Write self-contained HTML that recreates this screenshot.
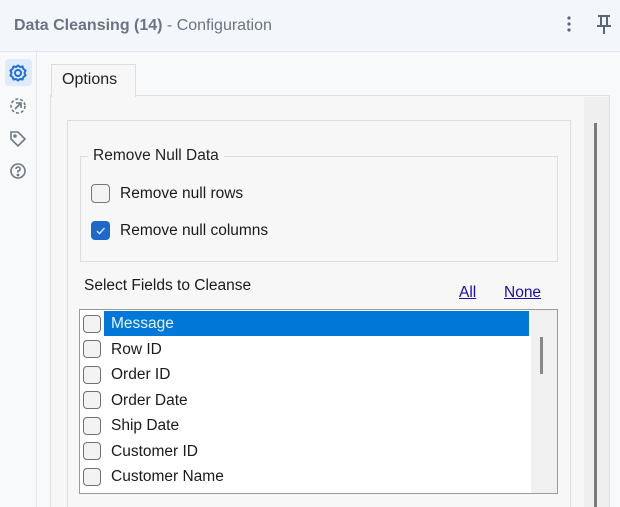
<!DOCTYPE html>
<html><head><meta charset="utf-8"><style>
*{box-sizing:border-box;margin:0;padding:0}
html,body{width:620px;height:507px;overflow:hidden}
body{background:#f8f9fb;font-family:"Liberation Sans",sans-serif;color:#222;position:relative}
.abs{position:absolute}
.hdr{left:0;top:0;width:620px;height:52px;background:#f3f6fb;border-bottom:1px solid #dde2ec}
.title{left:14px;top:17px;font-size:16px;color:#6b7385}
.side{left:0;top:52px;width:37px;height:455px;border-right:1px solid #e2e5ea;background:#f8f9fb}
.cb{position:absolute;width:18px;height:18px;border:1.5px solid #707070;border-radius:4px;background:#f3f3f3}
.t{position:absolute;font-size:15.5px;color:#1a1a1a;white-space:nowrap}
.row{position:absolute;left:0;width:470px;height:25px}
</style></head><body>
<div class="abs hdr"></div>
<div class="abs title"><b>Data Cleansing (14)</b> - Configuration</div>
<svg class="abs" style="left:562px;top:15px" width="14" height="18"><circle cx="7" cy="3" r="1.6" fill="#5b6579"/><circle cx="7" cy="9" r="1.6" fill="#5b6579"/><circle cx="7" cy="15" r="1.6" fill="#5b6579"/></svg>
<svg class="abs" style="left:595px;top:14px" width="18" height="22" fill="none" stroke="#5b6579" stroke-width="2"><path d="M3 2h12M6 2v9M12 2v9M2 12h14M9 12v8"/></svg>
<div class="abs side"></div>
<div class="abs" style="left:5px;top:59px;width:27px;height:27px;background:#dfeafa;border-radius:4px"></div>
<svg class="abs" style="left:8px;top:63px" width="20" height="20" fill="none" stroke="#1e6fd9" stroke-width="2"><circle cx="10" cy="10" r="3"/><path d="M10 2.5l2 1.5 2.5-.5 1 2.5 2 1.5-1 2.5 1 2.5-2 1.5-1 2.5-2.5-.5-2 1.5-2-1.5-2.5.5-1-2.5-2-1.5 1-2.5-1-2.5 2-1.5 1-2.5 2.5.5z"/></svg>
<svg class="abs" style="left:9px;top:97px" width="18" height="18" fill="none" stroke="#707888" stroke-width="1.6"><circle cx="9" cy="9" r="7" stroke-dasharray="3 2"/><path d="M6 12l6-6M7 6h5v5"/></svg>
<svg class="abs" style="left:9px;top:130px" width="18" height="18" fill="none" stroke="#707888" stroke-width="1.6"><path d="M2 2h7l7 7-7 7-7-7z"/><circle cx="6" cy="6" r="1"/></svg>
<svg class="abs" style="left:9px;top:162px" width="18" height="18" fill="none" stroke="#707888" stroke-width="1.6"><circle cx="9" cy="9" r="7"/><path d="M7 7a2 2 0 1 1 2 2v1.5"/><circle cx="9" cy="13" r=".6" fill="#707888"/></svg>
<div class="abs" style="left:50px;top:95px;width:560px;height:420px;border:1px solid #e0e0e0;background:#f7f7f7"></div>
<div class="abs" style="left:51px;top:64px;width:85px;height:33px;border:1px solid #ddd;border-bottom:none;background:#f7f7f7"></div>
<div class="abs" style="left:62px;top:71px;font-size:16px">Options</div>
<div class="abs" style="left:584px;top:97px;width:25px;height:410px;background:#efefef"></div>
<div class="abs" style="left:594px;top:123px;width:3px;height:384px;background:#7a7a7a"></div>
<div class="abs" style="left:67px;top:120px;width:504px;height:400px;border:1px solid #dcdcdc"></div>
<div class="abs" style="left:80px;top:156px;width:478px;height:106px;border:1px solid #dcdcdc"></div>
<div class="abs" style="left:88px;top:147px;padding:0 5px;background:#f7f7f7;font-size:15.5px">Remove Null Data</div>
<div class="cb" style="left:91px;top:184px;width:19px;height:19px;border-color:#777"></div>
<div class="t" style="left:120px;top:185px">Remove null rows</div>
<div class="cb" style="left:91px;top:221px;width:19px;height:19px;border:none;background:#1d68c9"></div>
<svg class="abs" style="left:91px;top:221px" width="19" height="19" fill="none" stroke="#cfe0f7" stroke-width="1.5"><path d="M6 10l2.5 2.5L13.5 7"/></svg>
<div class="t" style="left:120px;top:222px">Remove null columns</div>
<div class="t" style="left:84px;top:277px">Select Fields to Cleanse</div>
<div class="t" style="left:459px;top:284px;color:#1a0dab;text-decoration:underline">All</div>
<div class="t" style="left:504px;top:284px;color:#1a0dab;text-decoration:underline">None</div>
<div class="abs" style="left:79px;top:309px;width:479px;height:185px;border:1.5px solid #9a9a9a;background:#fff;overflow:hidden">
<div class="abs" style="left:451px;top:0;width:27px;height:185px;background:#f0f0f0"></div>
<div class="abs" style="left:460px;top:27px;width:3px;height:37px;background:#888"></div>
<div class="abs" style="left:24px;top:1px;width:425px;height:25px;background:#0078d7"></div>
<div style="position:absolute;left:0;top:0">
<div class="row" style="top:3px"><div class="cb" style="left:3px;top:1.5px"></div><div class="t" style="left:31px;top:2px;color:#e8f1fb">Message</div></div>
<div class="row" style="top:28.5px"><div class="cb" style="left:3px;top:1.5px"></div><div class="t" style="left:31px;top:2px">Row ID</div></div>
<div class="row" style="top:54px"><div class="cb" style="left:3px;top:1.5px"></div><div class="t" style="left:31px;top:2px">Order ID</div></div>
<div class="row" style="top:79.5px"><div class="cb" style="left:3px;top:1.5px"></div><div class="t" style="left:31px;top:2px">Order Date</div></div>
<div class="row" style="top:105px"><div class="cb" style="left:3px;top:1.5px"></div><div class="t" style="left:31px;top:2px">Ship Date</div></div>
<div class="row" style="top:130.5px"><div class="cb" style="left:3px;top:1.5px"></div><div class="t" style="left:31px;top:2px">Customer ID</div></div>
<div class="row" style="top:156px"><div class="cb" style="left:3px;top:1.5px"></div><div class="t" style="left:31px;top:2px">Customer Name</div></div>
</div>
</div>
</body></html>
